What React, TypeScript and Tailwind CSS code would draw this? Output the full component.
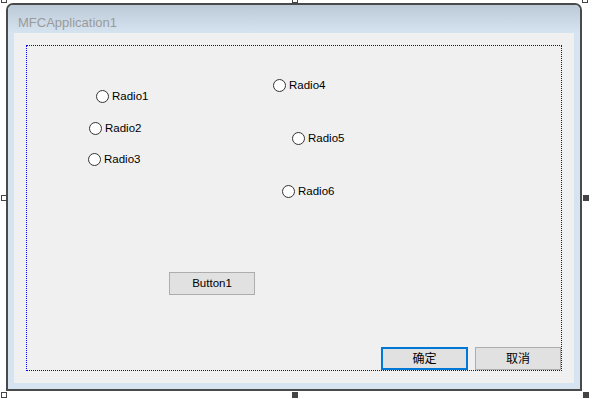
const font = { fontFamily: '"Liberation Sans", Arial, "Noto Sans CJK SC", sans-serif' };

type RadioProps = { label: string; x: number; y: number };

// control positions on the dialog canvas, relative to the client area
const radios: RadioProps[] = [
  { label: "Radio1", x: 82, y: 57 },
  { label: "Radio2", x: 75, y: 89 },
  { label: "Radio3", x: 74, y: 120 },
  { label: "Radio4", x: 259, y: 46 },
  { label: "Radio5", x: 278, y: 99 },
  { label: "Radio6", x: 268, y: 152 },
];

const Radio = ({ label, x, y }: RadioProps) => (
  <div className="absolute flex items-center gap-[3px] text-[11.5px] leading-[13px] text-black" style={{ left: x, top: y }}>
    <span className="h-[13px] w-[13px] rounded-full border border-[#333333] bg-white" />
    <span>{label}</span>
  </div>
);

const Handle = ({ className, filled }: { className: string; filled?: boolean }) => (
  <span className={`absolute h-[6px] w-[6px] border border-[#444444] ${filled ? "bg-[#444444]" : "bg-white"} ${className}`} />
);

export default function App() {
  return (
    <div className="relative h-[399px] w-[602px] overflow-hidden bg-white" style={font}>
      <div className="ml-[6px] mt-[3px] flex h-[388px] w-[576px] flex-col rounded-t-[7px] border-2 border-[#4a4a4a] bg-[#d6e3f0]">
        <div className="flex h-[28px] shrink-0 items-center rounded-t-[5px] bg-gradient-to-b from-[#bccad8] to-[#d6e3f0] pl-[10px] pt-[8px]">
          <span className="text-[13px] text-[#9a9a9a]">MFCApplication1</span>
        </div>
        <div className="flex flex-1 px-[6px] pb-[6px]">
          <div className="relative flex flex-1 bg-[#f0f0f0] p-[12px]">
            <div className="flex-1 border border-dotted border-[#0000ff]" />
            {radios.map((r) => (
              <Radio key={r.label} {...r} />
            ))}
            <button className="absolute left-[155px] top-[239px] flex h-[23px] w-[86px] items-center justify-center border border-[#adadad] bg-[#e1e1e1] text-[11.5px] text-black">
              Button1
            </button>
            <button className="absolute left-[367px] top-[314px] flex h-[23px] w-[87px] items-center justify-center border-2 border-[#0078d7] bg-[#e1e1e1] text-[12px] text-black">
              确定
            </button>
            <button className="absolute left-[461px] top-[314px] flex h-[23px] w-[86px] items-center justify-center border border-[#adadad] bg-[#e1e1e1] text-[12px] text-black">
              取消
            </button>
          </div>
        </div>
      </div>
      <Handle className="left-[1px] top-[-3px]" />
      <Handle className="left-[292px] top-[-3px]" />
      <Handle className="left-[582px] top-[-3px]" />
      <Handle className="left-[1px] top-[195px]" />
      <Handle className="left-[1px] top-[392px]" />
      <Handle className="left-[292px] top-[392px]" filled />
      <Handle className="left-[583px] top-[392px]" filled />
      <Handle className="left-[583px] top-[195px]" filled />
    </div>
  );
}
